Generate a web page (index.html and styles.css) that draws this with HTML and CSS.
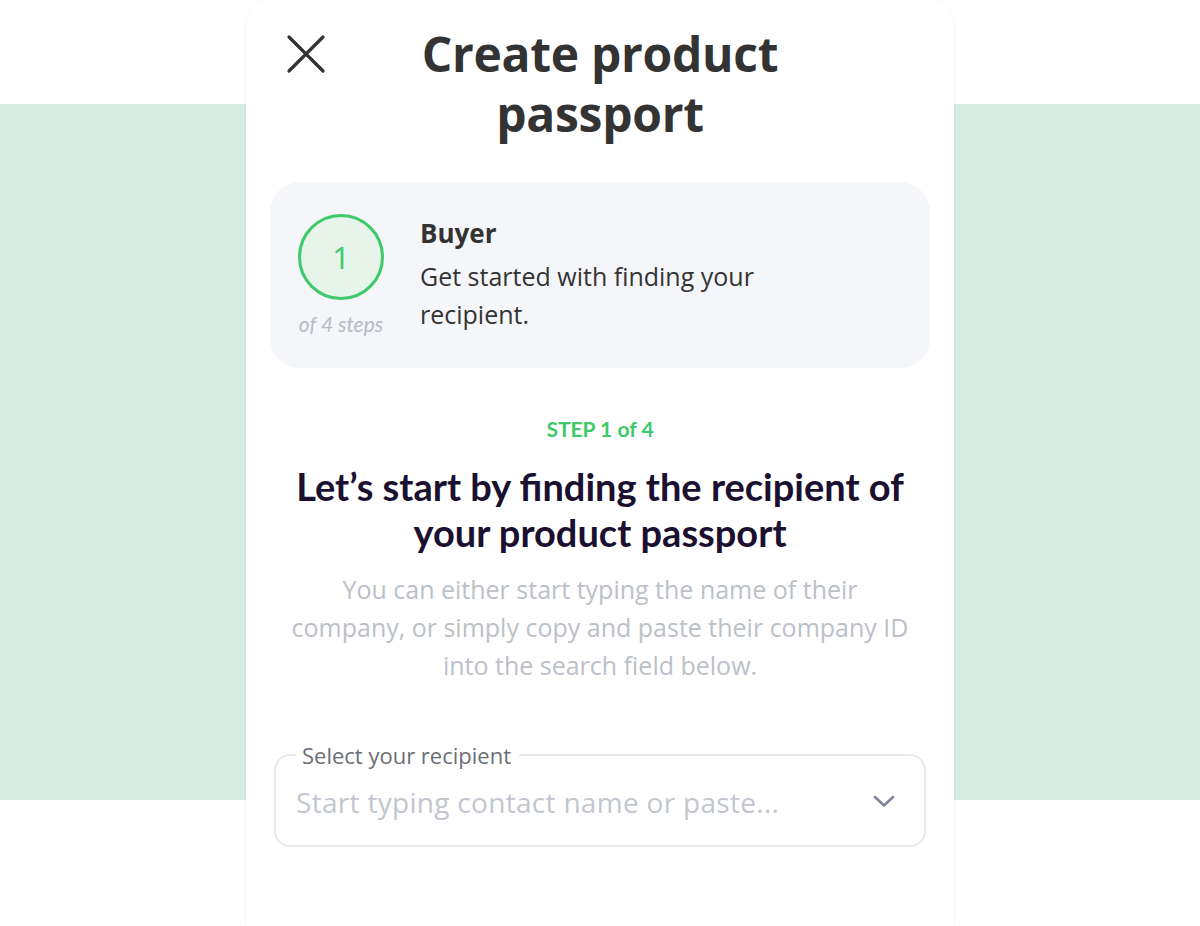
FILE: index.html
```html
<!DOCTYPE html>
<html lang="en">
<head>
<meta charset="utf-8">
<title>Create product passport</title>
<link rel="stylesheet" href="styles.css">
</head>
<body>
<main class="sheet">
  <header class="sheet-head">
    <button class="close" aria-label="Close">
      <svg width="40" height="40" viewBox="0 0 40 40"><path d="M3 3 L37 37 M37 3 L3 37" stroke="#333" stroke-width="3.2" stroke-linecap="round" fill="none"/></svg>
    </button>
    <h1 class="title">Create product passport</h1>
    <span class="head-spacer"></span>
  </header>

  <section class="step-card">
    <div class="step-badge">
      <div class="step-circle">1</div>
      <div class="step-of">of 4 steps</div>
    </div>
    <div class="step-info">
      <div class="step-name">Buyer</div>
      <p class="step-desc">Get started with finding your recipient.</p>
    </div>
  </section>

  <div class="step-label">STEP 1 of 4</div>
  <h2 class="headline">Let’s start by finding the recipient of your product passport</h2>
  <p class="lead">You can either start typing the name of their company, or simply copy and paste their company ID into the search field below.</p>

  <fieldset class="field">
    <legend class="field-label">Select your recipient</legend>
    <div class="field-row">
      <span class="placeholder">Start typing contact name or paste...</span>
      <svg class="chev" width="24" height="14" viewBox="0 0 24 14"><path d="M3 2 L12 10.5 L21 2" stroke="#7b8594" stroke-width="2.6" stroke-linecap="round" stroke-linejoin="round" fill="none"/></svg>
    </div>
  </fieldset>
</main>
</body>
</html>
```
FILE: styles.css
```css
html, body {
  margin: 0;
  padding: 0;
}
body {
  width: 1200px;
  height: 926px;
  overflow: hidden;
  background: linear-gradient(to bottom, #ffffff 0, #ffffff 104px, #d5ede0 104px, #d5ede0 800px, #ffffff 800px);
  font-family: "Open Sans", "Noto Sans", sans-serif;
}
.sheet {
  box-sizing: border-box;
  width: 708px;
  min-height: 926px;
  margin: 0 auto;
  background: #ffffff;
  border-radius: 26px 26px 0 0;
  box-shadow: 0 0 3px rgba(0,0,0,0.06);
  padding: 0 24px;
}
.sheet-head {
  display: grid;
  grid-template-columns: 90px 1fr 90px;
  align-items: start;
  padding-top: 24px;
}
.close {
  margin: 10px 0 0 16px;
  padding: 0;
  border: 0;
  background: none;
  width: 40px;
  height: 40px;
  display: flex;
}
.title {
  margin: 0;
  text-align: center;
  font-family: "Open Sans", sans-serif;
  font-weight: 700;
  font-size: 48px;
  line-height: 60px;
  color: #333333;
  letter-spacing: -0.3px;
}
.step-card {
  margin-top: 38px;
  background: #f5f6fa;
  border-radius: 30px;
  height: 186px;
  box-sizing: border-box;
  padding: 32px 28px 0 28px;
  display: flex;
  gap: 36px;
}
.step-badge {
  display: flex;
  flex-direction: column;
  align-items: center;
  width: 86px;
}
.step-circle {
  box-sizing: border-box;
  width: 86px;
  height: 86px;
  border-radius: 50%;
  border: 3px solid #3ec96a;
  background: #e6f4ea;
  color: #3ec96a;
  display: flex;
  align-items: center;
  justify-content: center;
  font-family: "Open Sans", sans-serif;
  font-size: 31px;
}
.step-of {
  margin-top: 11px;
  font-family: Lato, sans-serif;
  font-style: italic;
  font-size: 21px;
  line-height: 25px;
  color: #b6bac4;
  white-space: nowrap;
}
.step-info {
  padding-top: 1px;
}
.step-name {
  font-family: "Open Sans", sans-serif;
  font-weight: 700;
  font-size: 26px;
  line-height: 36px;
  color: #333333;
}
.step-desc {
  margin: 6px 0 0;
  max-width: 400px;
  font-size: 25px;
  line-height: 38px;
  color: #333333;
}
.step-label {
  margin-top: 48px;
  text-align: center;
  font-family: Lato, sans-serif;
  font-weight: 700;
  font-size: 21px;
  color: #3ec96a;
}
.headline {
  margin: 22px auto 0;
  max-width: 620px;
  text-align: center;
  font-family: Lato, sans-serif;
  font-weight: 700;
  font-size: 38px;
  line-height: 46px;
  color: #1b1030;
}
.lead {
  margin: 15px auto 0;
  max-width: 620px;
  text-align: center;
  font-size: 25px;
  line-height: 38px;
  color: #bcc0c8;
}
.field {
  margin: 56px 4px 0;
  border: 2px solid #e6e8ec;
  border-radius: 16px;
  padding: 0 28px 7px 20px;
  min-width: 0;
}
.field-label {
  margin-left: 0;
  padding: 0 8px 0 6px;
  font-size: 22px;
  line-height: 30px;
  color: #6b6e73;
}
.field-row {
  display: flex;
  align-items: center;
  justify-content: space-between;
  height: 72px;
  margin-top: -4px;
}
.placeholder {
  font-size: 28px;
  letter-spacing: 0.3px;
  color: #c2c6ce;
}
.chev {
  display: block;
}
```
